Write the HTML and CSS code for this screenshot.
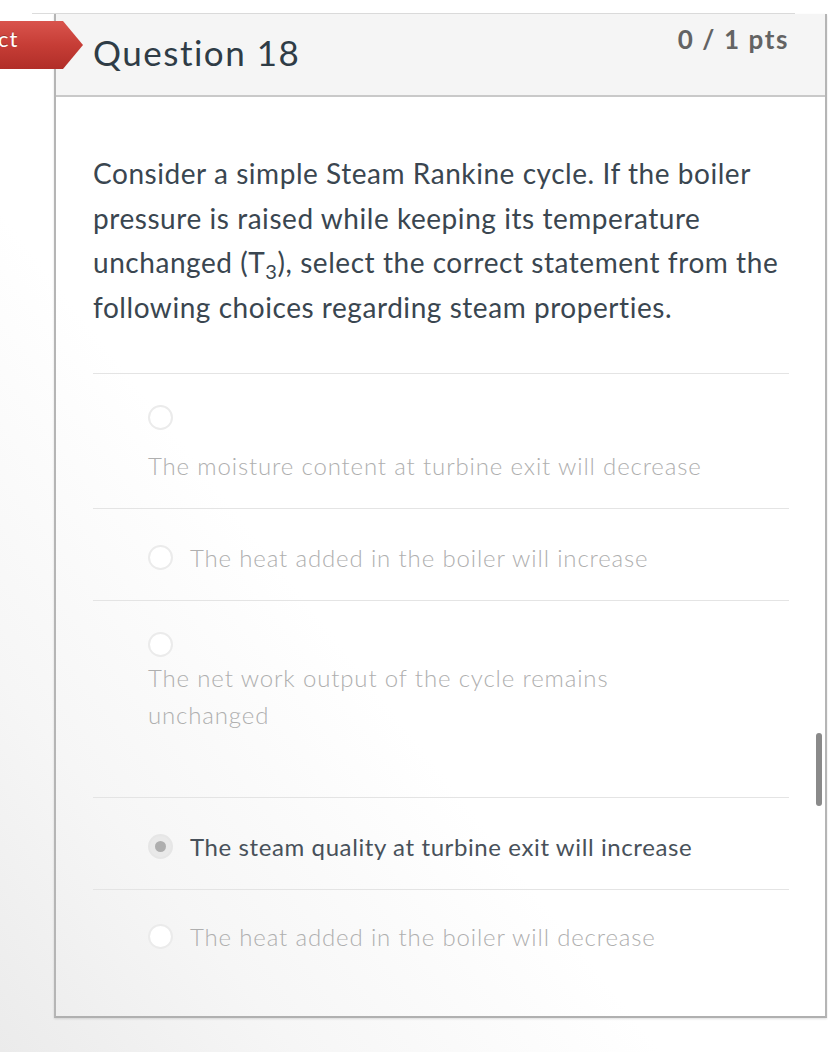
FILE: index.html
```html
<!DOCTYPE html>
<html lang="en">
<head>
<meta charset="utf-8">
<title>Question 18</title>
<link rel="stylesheet" href="styles.css">
</head>
<body>
<div class="page">
  <div class="top-rule"></div>
  <div class="badge"><span class="badge-text">ct</span></div>
  <section class="card">
    <header class="card-header">
      <h2 class="card-title">Question 18</h2>
      <div class="card-pts">0 / 1 pts</div>
    </header>
    <div class="card-body">
      <p class="question-text">Consider a simple Steam Rankine cycle. If the boiler pressure is raised while keeping its temperature unchanged (T<sub class="sub">3</sub>), select the correct statement from the following choices regarding steam properties.</p>
      <ul class="answers">
        <li class="answer answer--stacked answer--gap">
          <span class="radio-wrap"><span class="radio"></span></span>
          <span class="answer-text">The moisture content at turbine exit will decrease</span>
        </li>
        <li class="answer">
          <span class="radio-wrap"><span class="radio"></span></span>
          <span class="answer-text">The heat added in the boiler will increase</span>
        </li>
        <li class="answer answer--stacked answer--tall">
          <span class="radio-wrap"><span class="radio"></span></span>
          <span class="answer-text">The net work output of the cycle remains unchanged</span>
        </li>
        <li class="answer answer--selected">
          <span class="radio-wrap"><span class="radio radio--checked"></span></span>
          <span class="answer-text">The steam quality at turbine exit will increase</span>
        </li>
        <li class="answer answer--last">
          <span class="radio-wrap"><span class="radio"></span></span>
          <span class="answer-text">The heat added in the boiler will decrease</span>
        </li>
      </ul>
    </div>
  </section>
  <div class="scroll-thumb"></div>
</div>
</body>
</html>
```

FILE: styles.css
```css
* { box-sizing: border-box; }

html, body {
  margin: 0;
  padding: 0;
}

body {
  width: 828px;
  height: 1052px;
  overflow: hidden;
  font-family: Lato, "Open Sans", "Liberation Sans", sans-serif;
  background: linear-gradient(to top right, #ebebeb 0%, #f6f6f6 18%, #ffffff 40%);
}

.page {
  position: relative;
  padding-top: 13px;
  height: 1052px;
}

.top-rule {
  height: 1px;
  margin-left: 32px;
  width: 763px;
  background: #dcdcdc;
}

.badge {
  position: absolute;
  left: 0;
  top: 21px;
  width: 83px;
  height: 48px;
  clip-path: polygon(0 0, 63px 0, 83px 24px, 63px 48px, 0 48px);
  background: linear-gradient(to bottom, #d9544d 0%, #c63d36 50%, #b12e28 100%);
  z-index: 2;
}

.badge-text {
  display: block;
  margin-left: -2px;
  padding-top: 6px;
  font-size: 22px;
  line-height: 24px;
  letter-spacing: 1px;
  color: #ffffff;
  text-shadow: 0 -1px 0 rgba(0, 0, 0, 0.25);
}

.card {
  margin-left: 54px;
  width: 773px;
  height: 1004px;
  border-left: 2px solid #b5b5b5;
  border-right: 2px solid #b5b5b5;
  border-bottom: 2px solid #b0b0b0;
  box-shadow: 0 1px 2px rgba(0, 0, 0, 0.12);
}

.card-header {
  display: flex;
  justify-content: space-between;
  align-items: flex-start;
  height: 83px;
  padding: 11px 36px 0 37px;
  background: #f5f5f5;
  border-bottom: 2px solid #c9c9c9;
}

.card-title {
  margin: 8px 0 0 0;
  font-size: 35px;
  font-weight: 400;
  line-height: 38px;
  letter-spacing: 1.5px;
  color: #2f3c46;
}

.card-pts {
  font-size: 26px;
  font-weight: 700;
  line-height: 29px;
  letter-spacing: 1.6px;
  color: #636363;
}

.card-body {
  padding: 0 36px 0 37px;
}

.question-text {
  margin: 0;
  padding: 54px 0 43px 0;
  font-size: 28px;
  line-height: 44.7px;
  letter-spacing: 0.55px;
  color: #3a4650;
}

.sub {
  display: inline-block;
  font-size: 20px;
  line-height: 18px;
  vertical-align: -6px;
}

.answers {
  list-style: none;
  margin: 0;
  padding: 0;
}

.answer {
  display: flex;
  align-items: center;
  padding: 30px 0 24px 55px;
  border-top: 1px solid #e4e4e4;
  font-size: 24px;
  font-weight: 300;
  line-height: 37px;
  letter-spacing: 0.85px;
  color: #afafaf;
}

.answer--stacked {
  flex-direction: column;
  align-items: flex-start;
}

.answer--gap .answer-text {
  margin-top: 15px;
}

.answer--tall {
  padding-bottom: 64px;
}

.answer--last {
  padding-top: 28px;
}

.answer--selected {
  font-weight: 400;
  letter-spacing: 0.6px;
  color: #48515a;
}

.radio-wrap {
  display: flex;
  align-items: center;
  height: 28px;
  flex: none;
  margin-right: 17px;
}

.answer--stacked .radio-wrap {
  margin-right: 0;
}

.radio {
  display: flex;
  align-items: center;
  justify-content: center;
  width: 25px;
  height: 25px;
  border-radius: 50%;
  border: 2px solid #ebebeb;
  background: #ffffff;
}

.radio--checked {
  background: #e9e9e9;
  border-color: #e6e6e6;
}

.radio--checked::after {
  content: "";
  width: 11px;
  height: 11px;
  border-radius: 50%;
  background: #aeaeae;
}

.answer-text {
  max-width: 572px;
}

.scroll-thumb {
  position: absolute;
  left: 816px;
  top: 733px;
  width: 6px;
  height: 73px;
  border-radius: 3px;
  background: #8a8a8a;
}
```
